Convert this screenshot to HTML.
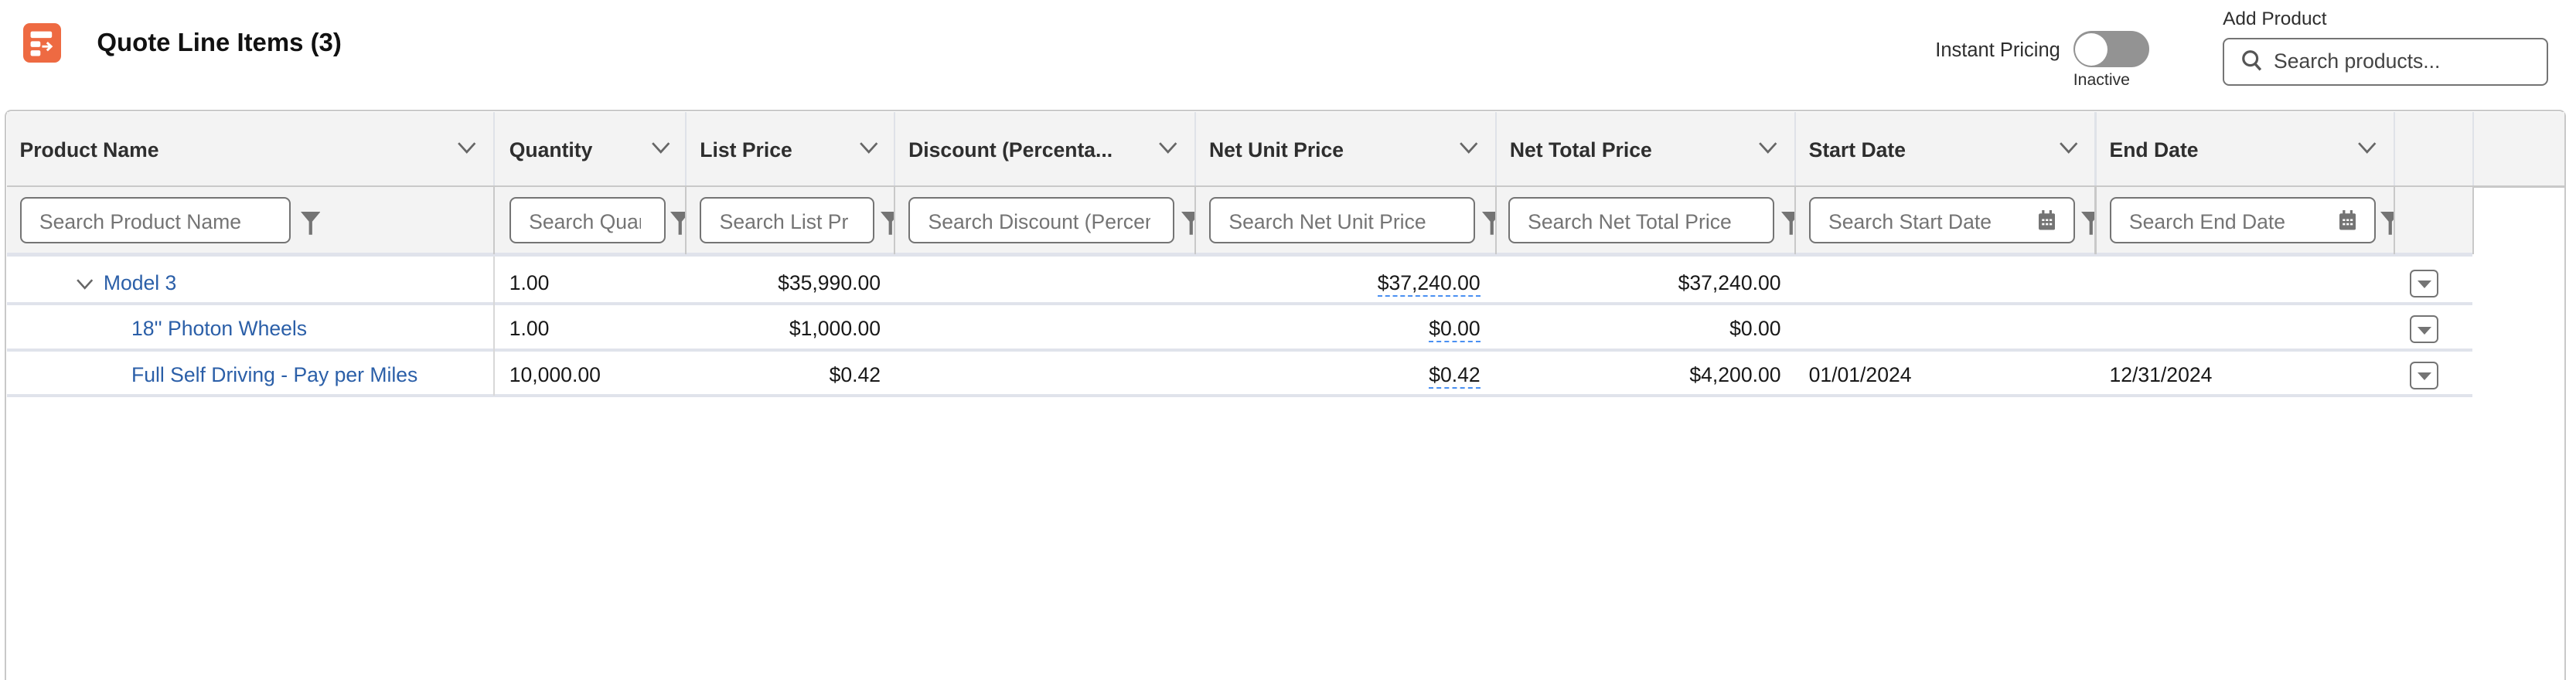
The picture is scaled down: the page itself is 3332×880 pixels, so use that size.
<!DOCTYPE html>
<html><head><meta charset="utf-8">
<style>
html,body{margin:0;padding:0;background:#fff;width:3332px;height:880px;overflow:hidden}
#w{zoom:2.125;position:relative;width:1568px;height:414.2px;font-family:"Liberation Sans",sans-serif;color:#181818}
.a{position:absolute;white-space:nowrap}
.hd{font-weight:bold;font-size:12.5px;color:#2e2e2e;top:84px}
.chev{position:absolute;top:86px;width:12px;height:8px}
.inp{position:absolute;top:120px;height:28px;border:1px solid #747474;border-radius:4px;background:#fff;box-sizing:border-box;font-size:12.5px;color:#747474;padding:7px 0 0 11px;white-space:nowrap}
.inp span{display:block;overflow:hidden;margin-right:14px}
.fun{position:absolute;top:129px;width:12px;height:14px}
.col{position:absolute;top:113px;height:42px;overflow:hidden}
.vs{position:absolute;width:1px;background:#dfe2e8}
.d{position:absolute;font-size:12.5px;white-space:nowrap;color:#181818}
.r{text-align:right}
.lk{color:#2b5fa8}
.du{border-bottom:1px dashed #4a90f2}
.hl{position:absolute;left:4px;width:1501px;height:2px;background:#e0e3eb}
.btn{position:absolute;left:1467px;width:17px;height:17px;border:1px solid #747474;border-radius:3px;box-sizing:border-box}
.btn:after{content:"";position:absolute;left:3.5px;top:6px;border-left:4.5px solid transparent;border-right:4.5px solid transparent;border-top:5px solid #747474}
.cal{position:absolute;top:128px;width:10px;height:12px}
</style></head><body><div id="w">
<div class="a" style="left:14px;top:14px;width:23px;height:24px;background:#ee6a42;border-radius:4px"></div>
<svg class="a" style="left:14px;top:14px" width="23" height="24" viewBox="0 0 23 24"><rect x="4.5" y="5" width="13" height="4" rx="1" fill="#fff"/><rect x="4.5" y="11" width="6" height="3.5" rx="1" fill="#fff"/><rect x="4.5" y="16.5" width="6" height="3.5" rx="1" fill="#fff"/><path d="M11.5 14.2h5M14.5 11.8l2.5 2.4-2.5 2.4" stroke="#fff" stroke-width="1.4" fill="none"/></svg>
<div class="a" style="left:59px;top:17px;font-size:15.5px;font-weight:bold;color:#111">Quote Line Items (3)</div>
<div class="a" style="left:1178px;top:24px;font-size:12px;color:#2e2e2e">Instant Pricing</div>
<div class="a" style="left:1262px;top:19px;width:46px;height:22px;border-radius:11px;background:#939393"></div>
<div class="a" style="left:1263px;top:20px;width:20px;height:20px;border-radius:10px;background:#fff"></div>
<div class="a" style="left:1262px;top:43px;font-size:10px;color:#2e2e2e">Inactive</div>
<div class="a" style="left:1353px;top:5px;font-size:11.5px;color:#2e2e2e">Add Product</div>
<div class="a" style="left:1353px;top:23px;width:198px;height:29px;border:1px solid #747474;border-radius:4px;box-sizing:border-box"></div>
<svg class="a" style="left:1364px;top:30px" width="13" height="14" viewBox="0 0 13 14"><circle cx="5.5" cy="5.5" r="4.2" stroke="#555" stroke-width="1.5" fill="none"/><path d="M8.5 8.8l3.2 3.6" stroke="#555" stroke-width="1.6"/></svg>
<div class="a" style="left:1384px;top:30px;font-size:12.5px;color:#444">Search products...</div>

<div class="a" style="left:3px;top:67px;width:1559px;height:360px;border:1px solid #c9c9c9;border-bottom:none;border-radius:4px 4px 0 0;box-sizing:border-box"></div>
<div class="a" style="left:4px;top:68px;width:1557px;height:45px;background:#f3f3f3"></div>
<div class="a" style="left:4px;top:113px;width:1557px;height:1.5px;background:#c9c9c9"></div>
<div class="a" style="left:4px;top:114px;width:1501px;height:41px;background:#f3f3f3"></div>
<div class="hl" style="top:154px"></div>
<div class="hl" style="top:184px"></div>
<div class="hl" style="top:212px"></div>
<div class="hl" style="top:240px"></div>
<div class="vs" style="left:300px;top:68px;height:45px"></div>
<div class="vs" style="left:417px;top:68px;height:45px"></div>
<div class="vs" style="left:544px;top:68px;height:45px"></div>
<div class="vs" style="left:727px;top:68px;height:45px"></div>
<div class="vs" style="left:910px;top:68px;height:45px"></div>
<div class="vs" style="left:1092px;top:68px;height:45px"></div>
<div class="vs" style="left:1275px;top:68px;height:45px"></div>
<div class="vs" style="left:1457px;top:68px;height:45px"></div>
<div class="vs" style="left:1505px;top:68px;height:45px"></div>
<div class="vs" style="left:300px;top:114px;height:41px;background:#c9c9c9"></div>
<div class="vs" style="left:417px;top:114px;height:41px;background:#c9c9c9"></div>
<div class="vs" style="left:544px;top:114px;height:41px;background:#c9c9c9"></div>
<div class="vs" style="left:727px;top:114px;height:41px;background:#c9c9c9"></div>
<div class="vs" style="left:910px;top:114px;height:41px;background:#c9c9c9"></div>
<div class="vs" style="left:1092px;top:114px;height:41px;background:#c9c9c9"></div>
<div class="vs" style="left:1275px;top:114px;height:41px;background:#c9c9c9"></div>
<div class="vs" style="left:1457px;top:114px;height:41px;background:#c9c9c9"></div>
<div class="vs" style="left:1505px;top:114px;height:41px;background:#c9c9c9"></div>
<div class="vs" style="left:300px;top:156px;height:85px;background:#d8d8d8"></div>

<div class="a hd" style="left:12px">Product Name</div>
<div class="a hd" style="left:310px">Quantity</div>
<div class="a hd" style="left:426px">List Price</div>
<div class="a hd" style="left:553px">Discount (Percenta...</div>
<div class="a hd" style="left:736px">Net Unit Price</div>
<div class="a hd" style="left:919px">Net Total Price</div>
<div class="a hd" style="left:1101px">Start Date</div>
<div class="a hd" style="left:1284px">End Date</div>
<svg class="chev" style="left:278px" viewBox="0 0 12 8"><path d="M1 1l5 5.5 5-5.5" stroke="#666" stroke-width="1.3" fill="none"/></svg>
<svg class="chev" style="left:396px" viewBox="0 0 12 8"><path d="M1 1l5 5.5 5-5.5" stroke="#666" stroke-width="1.3" fill="none"/></svg>
<svg class="chev" style="left:523px" viewBox="0 0 12 8"><path d="M1 1l5 5.5 5-5.5" stroke="#666" stroke-width="1.3" fill="none"/></svg>
<svg class="chev" style="left:705px" viewBox="0 0 12 8"><path d="M1 1l5 5.5 5-5.5" stroke="#666" stroke-width="1.3" fill="none"/></svg>
<svg class="chev" style="left:888px" viewBox="0 0 12 8"><path d="M1 1l5 5.5 5-5.5" stroke="#666" stroke-width="1.3" fill="none"/></svg>
<svg class="chev" style="left:1070px" viewBox="0 0 12 8"><path d="M1 1l5 5.5 5-5.5" stroke="#666" stroke-width="1.3" fill="none"/></svg>
<svg class="chev" style="left:1253px" viewBox="0 0 12 8"><path d="M1 1l5 5.5 5-5.5" stroke="#666" stroke-width="1.3" fill="none"/></svg>
<svg class="chev" style="left:1435px" viewBox="0 0 12 8"><path d="M1 1l5 5.5 5-5.5" stroke="#666" stroke-width="1.3" fill="none"/></svg>

<div class="inp" style="left:12px;width:165px"><span>Search Product Name</span></div>
<div class="col" style="left:183px;width:20px"><svg class="fun" style="left:0;top:16px" viewBox="0 0 12 14"><path d="M0 0h12L7 6v8H5V6z" fill="#747474"/></svg></div>
<div class="inp" style="left:310px;width:95px"><span>Search Quantity</span></div>
<div class="col" style="left:408px;width:9px"><svg class="fun" style="left:0;top:16px" viewBox="0 0 12 14"><path d="M0 0h12L7 6v8H5V6z" fill="#747474"/></svg></div>
<div class="inp" style="left:426px;width:106px"><span>Search List Price</span></div>
<div class="col" style="left:536px;width:8px"><svg class="fun" style="left:0;top:16px" viewBox="0 0 12 14"><path d="M0 0h12L7 6v8H5V6z" fill="#747474"/></svg></div>
<div class="inp" style="left:553px;width:162px"><span>Search Discount (Percentage)</span></div>
<div class="col" style="left:719px;width:8px"><svg class="fun" style="left:0;top:16px" viewBox="0 0 12 14"><path d="M0 0h12L7 6v8H5V6z" fill="#747474"/></svg></div>
<div class="inp" style="left:736px;width:162px"><span>Search Net Unit Price</span></div>
<div class="col" style="left:902px;width:8px"><svg class="fun" style="left:0;top:16px" viewBox="0 0 12 14"><path d="M0 0h12L7 6v8H5V6z" fill="#747474"/></svg></div>
<div class="inp" style="left:918px;width:162px"><span>Search Net Total Price</span></div>
<div class="col" style="left:1084px;width:8px"><svg class="fun" style="left:0;top:16px" viewBox="0 0 12 14"><path d="M0 0h12L7 6v8H5V6z" fill="#747474"/></svg></div>
<div class="inp" style="left:1101px;width:162px"><span>Search Start Date</span></div>
<svg class="cal" style="left:1241px" viewBox="0 0 10 12"><rect x="2" y="0" width="1.5" height="3" fill="#747474"/><rect x="6.5" y="0" width="1.5" height="3" fill="#747474"/><rect x="0" y="2" width="10" height="10" rx="1" fill="#747474"/><path d="M2 6h1.5M4.3 6h1.5M6.6 6h1.5M2 8.5h1.5M4.3 8.5h1.5M6.6 8.5h1.5" stroke="#fff" stroke-width="1.2"/></svg>
<div class="col" style="left:1267px;width:8px"><svg class="fun" style="left:0;top:16px" viewBox="0 0 12 14"><path d="M0 0h12L7 6v8H5V6z" fill="#747474"/></svg></div>
<div class="inp" style="left:1284px;width:162px"><span>Search End Date</span></div>
<svg class="cal" style="left:1424px" viewBox="0 0 10 12"><rect x="2" y="0" width="1.5" height="3" fill="#747474"/><rect x="6.5" y="0" width="1.5" height="3" fill="#747474"/><rect x="0" y="2" width="10" height="10" rx="1" fill="#747474"/><path d="M2 6h1.5M4.3 6h1.5M6.6 6h1.5M2 8.5h1.5M4.3 8.5h1.5M6.6 8.5h1.5" stroke="#fff" stroke-width="1.2"/></svg>
<div class="col" style="left:1449px;width:8px"><svg class="fun" style="left:0;top:16px" viewBox="0 0 12 14"><path d="M0 0h12L7 6v8H5V6z" fill="#747474"/></svg></div>

<svg class="a" style="left:46px;top:169px" width="11" height="8" viewBox="0 0 11 8"><path d="M1 1.5l4.5 5 4.5-5" stroke="#666" stroke-width="1.2" fill="none"/></svg>
<div class="d lk" style="left:63px;top:165px">Model 3</div>
<div class="d" style="left:310px;top:165px">1.00</div>
<div class="d r" style="right:1032px;top:165px">$35,990.00</div>
<div class="d du" style="right:667px;top:165px">$37,240.00</div>
<div class="d r" style="right:484px;top:165px">$37,240.00</div>
<div class="btn" style="top:164px"></div>

<div class="d lk" style="left:80px;top:193px">18'' Photon Wheels</div>
<div class="d" style="left:310px;top:193px">1.00</div>
<div class="d r" style="right:1032px;top:193px">$1,000.00</div>
<div class="d du" style="right:667px;top:193px">$0.00</div>
<div class="d r" style="right:484px;top:193px">$0.00</div>
<div class="btn" style="top:192px"></div>

<div class="d lk" style="left:80px;top:221px">Full Self Driving - Pay per Miles</div>
<div class="d" style="left:310px;top:221px">10,000.00</div>
<div class="d r" style="right:1032px;top:221px">$0.42</div>
<div class="d du" style="right:667px;top:221px">$0.42</div>
<div class="d r" style="right:484px;top:221px">$4,200.00</div>
<div class="d" style="left:1101px;top:221px">01/01/2024</div>
<div class="d" style="left:1284px;top:221px">12/31/2024</div>
<div class="btn" style="top:220px"></div>
</div></body></html>
